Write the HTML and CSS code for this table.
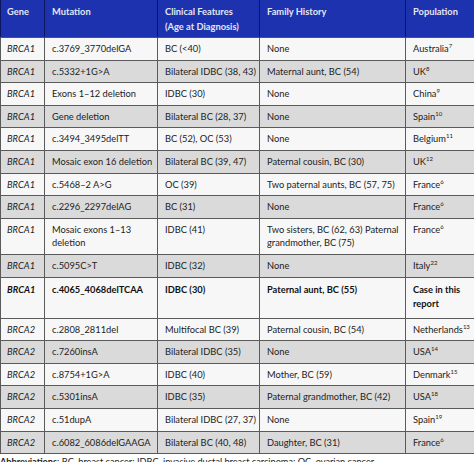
FILE: index.html
```html
<!DOCTYPE html>
<html>
<head>
<meta charset="utf-8">
<link rel="stylesheet" href="styles.css">
</head>
<body>
<table class="tbl">
  <colgroup>
    <col class="c1"><col class="c2"><col class="c3"><col class="c4"><col class="c5">
  </colgroup>
  <thead>
    <tr>
      <th>Gene</th>
      <th>Mutation</th>
      <th>Clinical Features<br>(Age at Diagnosis)</th>
      <th>Family History</th>
      <th>Population</th>
    </tr>
  </thead>
  <tbody>
    <tr class="w"><td class="g">BRCA1</td><td>c.3769_3770delGA</td><td>BC (&lt;40)</td><td>None</td><td>Australia<sup>7</sup></td></tr>
    <tr class="s"><td class="g">BRCA1</td><td>c.5332+1G&gt;A</td><td>Bilateral IDBC (38, 43)</td><td>Maternal aunt, BC (54)</td><td>UK<sup>8</sup></td></tr>
    <tr class="w"><td class="g">BRCA1</td><td>Exons 1–12 deletion</td><td>IDBC (30)</td><td>None</td><td>China<sup>9</sup></td></tr>
    <tr class="s"><td class="g">BRCA1</td><td>Gene deletion</td><td>Bilateral BC (28, 37)</td><td>None</td><td>Spain<sup>10</sup></td></tr>
    <tr class="w"><td class="g">BRCA1</td><td>c.3494_3495delTT</td><td>BC (52), OC (53)</td><td>None</td><td>Belgium<sup>11</sup></td></tr>
    <tr class="s"><td class="g">BRCA1</td><td>Mosaic exon 16 deletion</td><td>Bilateral BC (39, 47)</td><td>Paternal cousin, BC (30)</td><td>UK<sup>12</sup></td></tr>
    <tr class="w"><td class="g">BRCA1</td><td>c.5468–2 A&gt;G</td><td>OC (39)</td><td>Two paternal aunts, BC (57, 75)</td><td>France<sup>6</sup></td></tr>
    <tr class="s"><td class="g">BRCA1</td><td>c.2296_2297delAG</td><td>BC (31)</td><td>None</td><td>France<sup>6</sup></td></tr>
    <tr class="w"><td class="g">BRCA1</td><td>Mosaic exons 1–13<br>deletion</td><td>IDBC (41)</td><td>Two sisters, BC (62, 63) Paternal<br>grandmother, BC (75)</td><td>France<sup>6</sup></td></tr>
    <tr class="s"><td class="g">BRCA1</td><td>c.5095C&gt;T</td><td>IDBC (32)</td><td>None</td><td>Italy<sup>22</sup></td></tr>
    <tr class="w b"><td class="g">BRCA1</td><td>c.4065_4068delTCAA</td><td>IDBC (30)</td><td>Paternal aunt, BC (55)</td><td>Case in this<br>report</td></tr>
    <tr class="w"><td class="g">BRCA2</td><td>c.2808_2811del</td><td>Multifocal BC (39)</td><td>Paternal cousin, BC (54)</td><td>Netherlands<sup>13</sup></td></tr>
    <tr class="s"><td class="g">BRCA2</td><td>c.7260insA</td><td>Bilateral IDBC (35)</td><td>None</td><td>USA<sup>14</sup></td></tr>
    <tr class="w"><td class="g">BRCA2</td><td>c.8754+1G&gt;A</td><td>IDBC (40)</td><td>Mother, BC (59)</td><td>Denmark<sup>15</sup></td></tr>
    <tr class="s"><td class="g">BRCA2</td><td>c.5301insA</td><td>IDBC (35)</td><td>Paternal grandmother, BC (42)</td><td>USA<sup>18</sup></td></tr>
    <tr class="w"><td class="g">BRCA2</td><td>c.51dupA</td><td>Bilateral IDBC (27, 37)</td><td>None</td><td>Spain<sup>19</sup></td></tr>
    <tr class="s"><td class="g">BRCA2</td><td>c.6082_6086delGAAGA</td><td>Bilateral BC (40, 48)</td><td>Daughter, BC (31)</td><td>France<sup>6</sup></td></tr>
  </tbody>
</table>
<p class="note"><strong>Abbreviations</strong>: BC, breast cancer; IDBC, invasive ductal breast carcinoma; OC, ovarian cancer.</p>
</body>
</html>
```
FILE: styles.css
```css
html, body {
  margin: 0;
  padding: 0;
  background: #ffffff;
}
body {
  font-family: Lato, "Open Sans", sans-serif;
  color: #222222;
  font-size: 9.3px;
}
.tbl {
  width: 474px;
  border-collapse: collapse;
  table-layout: fixed;
}
.c1 { width: 44px; }
.c2 { width: 113px; }
.c3 { width: 102px; }
.c4 { width: 146px; }
.c5 { width: 69px; }
.tbl th {
  background: #1c32ae;
  color: #e4e6f2;
  font-weight: 700;
  text-align: left;
  vertical-align: top;
  padding: 4px 1px 3px 7px;
  line-height: 15px;
  height: 30px;
  border-left: 1px solid #0c1660;
  border-right: 1px solid #0c1660;
  border-bottom: 1px solid #555555;
}
.tbl td {
  text-align: left;
  vertical-align: top;
  padding: 4px 1px 4px 7px;
  line-height: 13.6px;
  white-space: nowrap;
  border: 1px solid #5a5a5a;
}
.tbl td:first-child, .tbl th:first-child { padding-left: 6px; }
.tbl tr.w td { background: #f7f7f7; }
.tbl tr.s td { background: #dadada; }
.tbl td.g { font-style: italic; }
.tbl tr.b td {
  font-weight: 700;
  color: #111111;
  line-height: 14.5px;
  padding-top: 5px;
  padding-bottom: 6px;
}
sup {
  font-size: 6px;
  line-height: 0;
  vertical-align: 4px;
}
.note {
  margin: 2px 0 0 0;
  font-size: 9.2px;
  line-height: 11px;
  color: #222222;
}
.note strong { font-weight: 700; }
```
